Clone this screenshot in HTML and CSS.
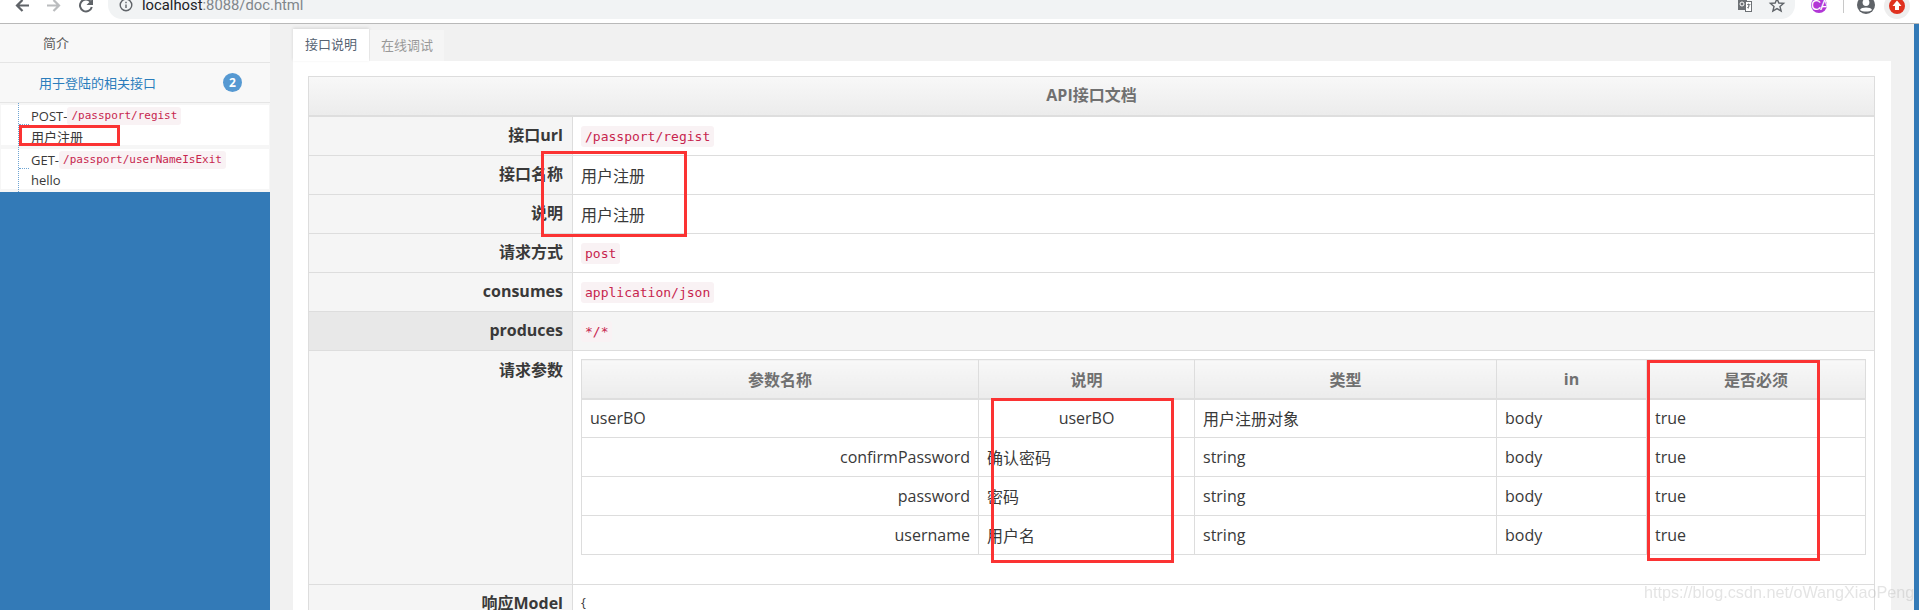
FILE: index.html
```html
<!DOCTYPE html>
<html lang="zh-CN">
<head>
<meta charset="utf-8">
<title>doc</title>
<link rel="stylesheet" href="styles.css">
</head>
<body>
<header class="toolbar">
  <div class="nav">
    <svg class="nav-icon" viewBox="0 0 16 16"><path d="M15 5.500H3M8.500 0L3 5.500 8.500 11" fill="none" stroke="#5f6368" stroke-width="2.200"/></svg>
    <svg class="nav-icon" viewBox="0 0 16 16"><path d="M1 5.500h12M7.500 0L13 5.500 7.500 11" fill="none" stroke="#babcbe" stroke-width="2.200"/></svg>
    <svg class="nav-icon" viewBox="0 0 16 16"><path d="M12.500 1.500A6 6 0 1 0 13.800 7" fill="none" stroke="#5f6368" stroke-width="2"/><path d="M15 -1.500v6.500H8.500z" fill="#5f6368"/></svg>
  </div>
  <div class="omnibox">
    <svg class="info" viewBox="0 0 14 14"><circle cx="7" cy="5" r="5.800" fill="none" stroke="#5f6368" stroke-width="1.400"/><path d="M7 4.500v3.500M7 1.800v1.500" stroke="#5f6368" stroke-width="1.400"/></svg>
    <span class="url"><span class="host">localhost</span>:8088/doc.html</span>
    <span class="spacer"></span>
    <svg class="translate" viewBox="0 0 14 14"><rect x="0" y="-1" width="9" height="11" fill="#6d7175"/><circle cx="4" cy="4" r="2" fill="none" stroke="#fff"/><rect x="7.500" y="1.500" width="6" height="10" fill="#fff" stroke="#6d7175"/><path d="M9 4.500h3.500M10.500 3.500v5M9 8l3-2.500" stroke="#6d7175" stroke-width=".8" fill="none"/></svg>
    <svg class="star" viewBox="0 0 16 16"><path d="M8 -1.500l2.100 5 5.400.4-4.100 3.500 1.300 5.200L8 9.800l-4.700 2.800 1.300-5.200L.500 3.900l5.400-.4z" fill="none" stroke="#5f6368" stroke-width="1.600"/></svg>
  </div>
  <div class="ext">
    <span class="ca">CA</span>
    <span class="sep"></span>
    <svg class="avatar" viewBox="0 0 18 18"><circle cx="9" cy="5" r="9" fill="#5f6368"/><circle cx="9" cy="2.500" r="3.400" fill="#fff"/><path d="M3 10c1.200-3.200 10.800-3.200 12 0-2.500 2-9.500 2-12 0z" fill="#fff"/></svg>
    <span class="update"><svg viewBox="0 0 16 16"><circle cx="8" cy="8" r="8" fill="#e0311f"/><path d="M8 2.500L12.500 8H10v4H6V8H3.500z" fill="#fff"/></svg></span>
  </div>
</header>

<div class="app">
  <nav class="sidebar">
    <div class="menu-item intro-item"><span class="intro">简介</span></div>
    <div class="menu-item group">
      <span class="group-name">用于登陆的相关接口</span>
      <span class="badge">2</span>
    </div>
    <div class="api-list">
      <div class="api-item">
        <div class="api-line">POST-<code class="code-sm">/passport/regist</code></div>
        <div class="api-line">用户注册</div>
      </div>
      <div class="api-item">
        <div class="api-line">GET-<code class="code-sm">/passport/userNameIsExit</code></div>
        <div class="api-line">hello</div>
      </div>
    </div>
  </nav>

  <main class="main">
    <div class="tabs">
      <span class="tab active">接口说明</span>
      <span class="tab">在线调试</span>
    </div>
    <section class="panel">
      <div class="doc">
        <div class="doc-title">API接口文档</div>
        <div class="doc-row"><div class="label">接口url</div><div class="value"><code class="code">/passport/regist</code></div></div>
        <div class="doc-row"><div class="label">接口名称</div><div class="value">用户注册</div></div>
        <div class="doc-row"><div class="label">说明</div><div class="value">用户注册</div></div>
        <div class="doc-row"><div class="label">请求方式</div><div class="value"><code class="code">post</code></div></div>
        <div class="doc-row"><div class="label">consumes</div><div class="value"><code class="code">application/json</code></div></div>
        <div class="doc-row hover"><div class="label">produces</div><div class="value"><code class="code">*/*</code></div></div>
        <div class="doc-row params">
          <div class="label">请求参数</div>
          <div class="value">
            <table class="ptable">
              <colgroup><col class="c1"><col class="c2"><col class="c3"><col class="c4"><col class="c5"></colgroup>
              <thead><tr><th>参数名称</th><th>说明</th><th>类型</th><th>in</th><th>是否必须</th></tr></thead>
              <tbody>
                <tr><td>userBO</td><td class="center">userBO</td><td>用户注册对象</td><td>body</td><td>true</td></tr>
                <tr><td class="right">confirmPassword</td><td>确认密码</td><td>string</td><td>body</td><td>true</td></tr>
                <tr><td class="right">password</td><td>密码</td><td>string</td><td>body</td><td>true</td></tr>
                <tr><td class="right">username</td><td>用户名</td><td>string</td><td>body</td><td>true</td></tr>
              </tbody>
            </table>
          </div>
        </div>
        <div class="doc-row"><div class="label">响应Model</div><div class="value model">{</div></div>
      </div>
    </section>
  </main>
</div>

<div class="mark mark-side"></div>
<div class="mark mark-desc"></div>
<div class="mark mark-param"></div>
<div class="mark mark-req"></div>
<div class="watermark">https://blog.csdn.net/oWangXiaoPeng</div>
</body>
</html>
```

FILE: styles.css
```css
* { box-sizing: border-box; }
html, body { margin: 0; height: 610px; overflow: hidden; }
body {
  position: relative;
  font-family: "Open Sans", "Noto Sans CJK SC", sans-serif;
  font-size: 16px;
  color: #393939;
  background: #f1f1f1;
  display: flex;
  flex-direction: column;
}
svg { display: block; overflow: visible; }

.toolbar {
  height: 24px;
  flex: none;
  display: flex;
  align-items: flex-start;
  background: #fff;
  border-bottom: 1px solid #b9b9b9;
  overflow: hidden;
}
.nav { display: flex; gap: 16px; padding-left: 14px; width: 108px; flex: none; }
.nav-icon { width: 16px; height: 16px; flex: none; }
.omnibox {
  width: 1687px;
  height: 19px;
  flex: none;
  display: flex;
  align-items: flex-start;
  background: #f1f3f4;
  border-radius: 0 0 14px 14px;
  padding: 0 11px 0 11px;
}
.info { width: 14px; height: 14px; flex: none; }
.url { margin-left: 9px; font: 14.8px/11px Roboto, sans-serif; color: #80868b; white-space: nowrap; }
.host { color: #202124; }
.spacer { flex: 1; }
.translate { width: 14px; height: 14px; margin-right: 18px; }
.star { width: 14px; height: 14px; }
.ext { flex: 1; display: flex; align-items: flex-start; }
.ca {
  width: 16px; height: 16px; margin: -3px 0 0 16px;
  border-radius: 50%;
  background: #b137d6;
  color: #fff;
  font: 14px/17px "Liberation Sans", sans-serif;
  letter-spacing: -1px;
  text-align: center;
  overflow: hidden;
}
.sep { width: 1px; height: 13px; margin-left: 16px; background: #c8c8c8; }
.avatar { width: 18px; height: 18px; margin-left: 13px; }
.update {
  width: 26px; height: 26px; margin: -7px 0 0 9px;
  border-radius: 50%;
  background: #eeeeee;
  padding: 5px;
}
.update svg { width: 16px; height: 16px; }

.app { flex: 1; display: flex; min-height: 0; }
.sidebar { width: 270px; flex: none; background: #337ab7; }
.menu-item {
  height: 39px;
  display: flex;
  align-items: center;
  background: #f8f8f8;
  border-bottom: 1px solid #e5e5e5;
  font-size: 13px;
}
.intro-item { padding-bottom: 2px; }
.intro { margin-left: 43px; color: #585858; }
.group { height: 40px; justify-content: space-between; padding: 0 28px 1px 39px; }
.group-name { color: #2b7dbc; }
.badge {
  width: 19px; height: 19px;
  border-radius: 50%;
  background: #5699d2;
  color: #fff;
  font-size: 12px;
  font-weight: 700;
  line-height: 19px;
  text-align: center;
}
.api-list {
  position: relative;
  background: #f6f6f6;
  padding: 2px 1px 0;
  display: flex;
  flex-direction: column;
  gap: 4px;
  height: 89px;
}
.api-list::before {
  content: "";
  position: absolute;
  left: 18px; top: 0; bottom: 0;
  border-left: 1px dotted #6fa5d3;
  z-index: 1;
}
.api-item {
  position: relative;
  height: 40px;
  background: #fff;
  padding: 1px 0 0 30px;
  font-size: 13px;
  color: #393939;
}
.api-item::before {
  content: "";
  position: absolute;
  left: 18px; top: 19px; width: 10px;
  border-top: 1px dotted #6fa5d3;
}
.api-line { display: flex; align-items: center; height: 20px; white-space: nowrap; }
.code-sm, .code {
  font-family: "DejaVu Sans Mono", monospace;
  background: #f9f2f4;
  color: #c7254e;
  border-radius: 3px;
}
.code-sm { font-size: 11px; padding: 1px 4px; line-height: 16px; }
.code { display: inline-block; font-size: 13px; padding: 2px 4px; line-height: 17px; }

.main { flex: 1; padding: 5px 23px 0 23px; border-right: 5px solid #337ab7; min-width: 0; }
.tabs { display: flex; height: 32px; }
.tab {
  width: 74px; margin-top: 1px;
  background: #f5f5f5;
  color: #999;
  font-size: 13px;
  line-height: 30px;
  text-align: center;
}
.tab.active {
  width: 76px; margin: 0 1px 0 0;
  background: #fff;
  color: #576373;
  box-shadow: 0 -1px 3px rgba(0,0,0,.12);
  line-height: 31px;
}
.panel { height: 549px; background: #fff; padding: 15px 16px 0 15px; }
.doc { border: 1px solid #ddd; border-bottom: 0; }
.doc-title {
  height: 40px;
  background: linear-gradient(#f8f8f8, #ececec);
  border-bottom: 2px solid #dedede;
  color: #707070;
  font-weight: 700;
  line-height: 37px;
  text-align: center;
}
.doc-row {
  display: flex;
  height: 39px;
  border-bottom: 1px solid #ddd;
}
.label {
  width: 264px;
  flex: none;
  padding-right: 9px;
  border-right: 1px solid #ddd;
  background: #f5f5f5;
  font-weight: 700;
  line-height: 37px;
  text-align: right;
}
.value { flex: 1; padding: 0 8px; display: flex; align-items: center; min-width: 0; }
.hover .label { background: #e8e8e8; }
.hover .value { background: #f5f5f5; }
.params { height: 234px; }
.params .value { display: block; padding: 8px 8px 0 8px; }
.params .label { line-height: 30px; padding-top: 4px; }
.model { align-items: flex-start; padding-top: 8px; font-size: 13px; line-height: 18px; }

.ptable { width: 1284px; table-layout: fixed; border-collapse: collapse; }
.c1 { width: 397px; } .c2 { width: 216px; } .c3 { width: 302px; } .c4 { width: 150px; } .c5 { width: 219px; }
.ptable th, .ptable td { border: 1px solid #ddd; padding: 0 8px; height: 39px; font-size: 16px; text-align: left; font-weight: 400; }
.ptable th {
  height: 39px;
  background: linear-gradient(#f8f8f8, #ececec);
  border-bottom: 2px solid #dedede;
  color: #707070;
  font-weight: 700;
  text-align: center;
}
.ptable .right { text-align: right; }
.ptable .center { text-align: center; }

.mark { position: absolute; border: 3px solid #fb3333; pointer-events: none; }
.mark-side { left: 19px; top: 125px; width: 101px; height: 21px; }
.mark-desc { left: 541px; top: 151px; width: 146px; height: 86px; }
.mark-param { left: 991px; top: 398px; width: 183px; height: 165px; }
.mark-req { left: 1647px; top: 360px; width: 173px; height: 201px; }
.watermark {
  position: absolute;
  left: 1644px;
  top: 581px;
  color: rgba(170,170,170,.32);
  font: 16.200px/22px "Liberation Sans", sans-serif;
  white-space: nowrap;
  filter: blur(.4px);
}
```
